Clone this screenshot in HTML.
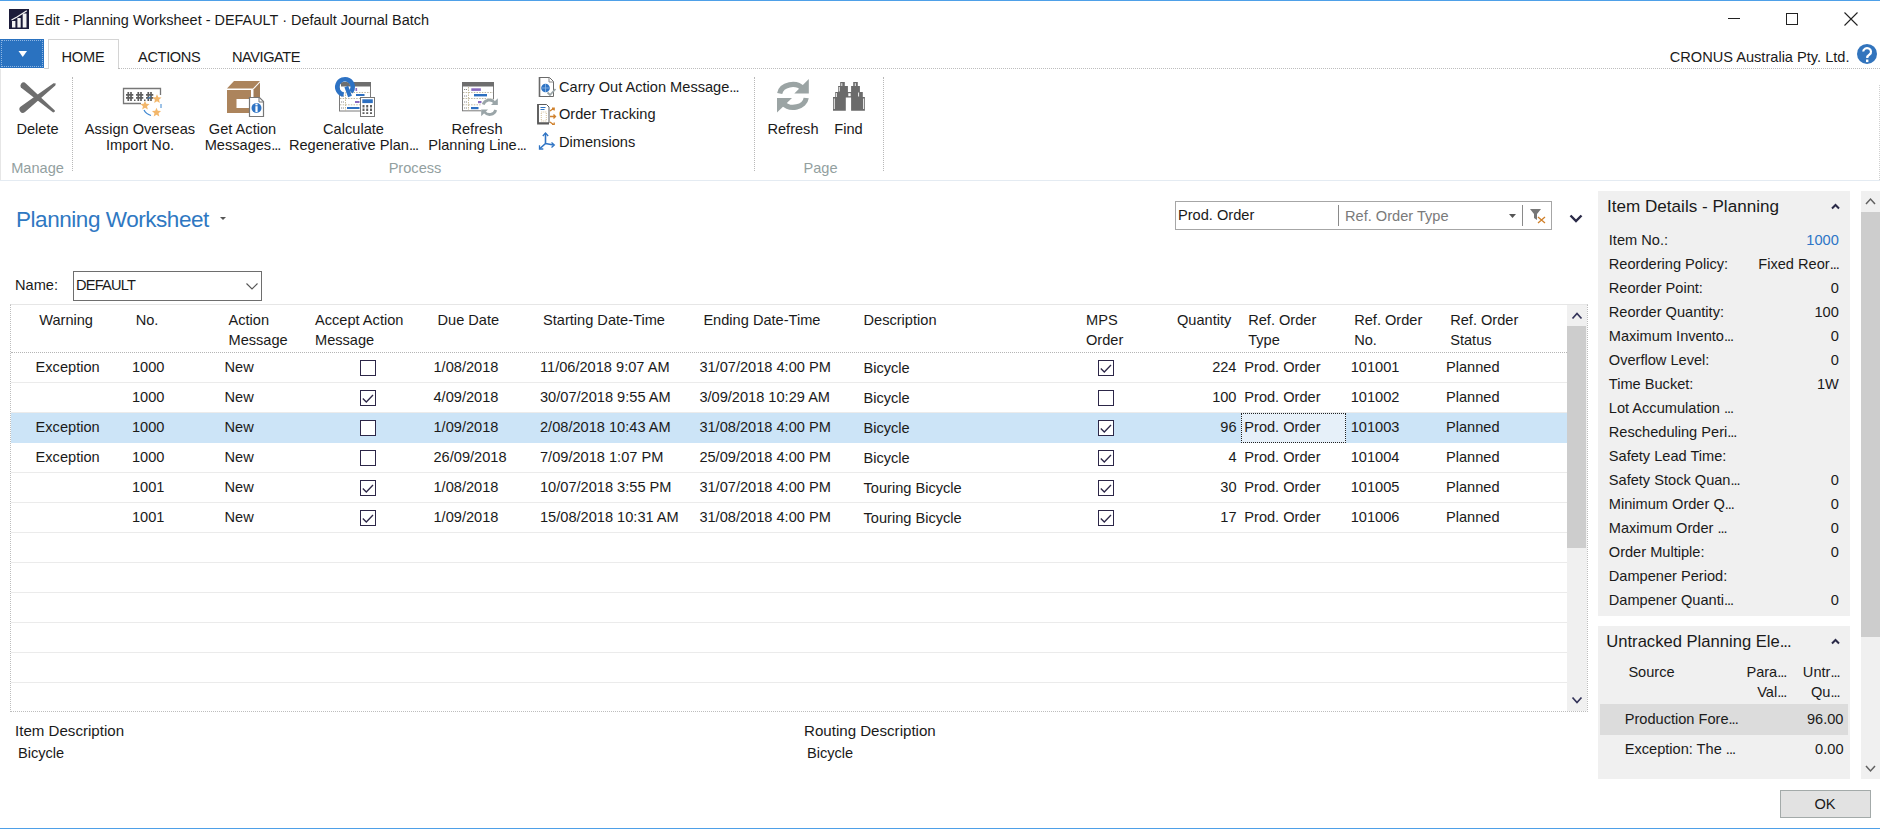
<!DOCTYPE html>
<html><head><meta charset="utf-8"><style>
html,body{margin:0;padding:0;background:#fff;width:1880px;height:829px;overflow:hidden;position:relative}
body{font-family:"Liberation Sans",sans-serif;color:#1a1a1a;font-size:14.6px}
.t{position:absolute;white-space:nowrap;font-size:14.6px;line-height:20px}
.c{text-align:center}
.el{letter-spacing:-1px}
svg{display:block}
</style></head><body>
<div style="position:absolute;left:0px;top:0px;width:1880px;height:1px;background:#4ea0e8"></div>
<div style="position:absolute;left:0px;top:828px;width:1880px;height:1px;background:#4ea0e8"></div>
<div class="t" style="top:9.6px;left:35.0px;font-size:14.45px;line-height:20px;">Edit - Planning Worksheet - DEFAULT · Default Journal Batch</div>
<div style="position:absolute;left:1728px;top:18px;width:12px;height:1px;background:#222"></div>
<div style="position:absolute;left:1786px;top:13px;width:12px;height:12px;border:1px solid #222;box-sizing:border-box"></div>
<svg style="position:absolute;left:1844px;top:12px" width="14" height="14" viewBox="0 0 14 14"><path d="M0.5 0.5L13.5 13.5M13.5 0.5L0.5 13.5" stroke="#222" stroke-width="1.1"/></svg>
<div style="position:absolute;left:0px;top:39px;width:44px;height:29px;background:#2a72c0"></div>
<div style="position:absolute;left:1px;top:40px;width:42px;height:27px;border:1px dotted #8fb6e2;box-sizing:border-box"></div>
<svg style="position:absolute;left:18px;top:51px" width="10" height="8" viewBox="0 0 10 8"><path d="M0.5 0H9L4.75 6z" fill="#fff"/></svg>
<div style="position:absolute;left:48px;top:39px;width:69px;height:29px;border:1px solid #d4d4d4;border-bottom:none;background:#fff"></div>
<div style="position:absolute;left:44px;top:68px;width:4px;height:1px;background:#d0d0d0"></div>
<div style="position:absolute;left:118px;top:68px;width:1762px;height:1px;border-top:1px dotted #bdbdbd;box-sizing:border-box"></div>
<div style="position:absolute;left:1879px;top:85px;width:1px;height:95px;border-left:1px dotted #d0d0d0;box-sizing:border-box"></div>
<div class="t" style="top:46.5px;left:61.5px;letter-spacing:-0.2px;">HOME</div>
<div class="t" style="top:46.5px;left:138.0px;letter-spacing:-0.35px;">ACTIONS</div>
<div class="t" style="top:46.5px;left:232.0px;letter-spacing:-0.45px;">NAVIGATE</div>
<div class="t" style="top:47.0px;right:30.5px;">CRONUS Australia Pty. Ltd.</div>
<div style="position:absolute;left:0px;top:69px;width:1px;height:111px;background:#e6e6e6"></div>
<div style="position:absolute;left:0px;top:180px;width:1880px;height:1px;background:#e4ebf2"></div>
<div style="position:absolute;left:72px;top:77px;width:1px;height:94px;border-left:1px dotted #b8b8b8;box-sizing:border-box"></div>
<div style="position:absolute;left:754px;top:77px;width:1px;height:94px;border-left:1px dotted #b8b8b8;box-sizing:border-box"></div>
<div style="position:absolute;left:883px;top:77px;width:1px;height:94px;border-left:1px dotted #b8b8b8;box-sizing:border-box"></div>
<div class="t c" style="left:-62.5px;top:118.69999999999999px;width:200px;">Delete</div>
<div class="t c" style="left:40px;top:118.69999999999999px;width:200px;">Assign Overseas</div>
<div class="t c" style="left:40px;top:134.7px;width:200px;">Import No.</div>
<div class="t c" style="left:142.5px;top:118.69999999999999px;width:200px;">Get Action</div>
<div class="t c" style="left:142.5px;top:134.7px;width:200px;">Messages<span class="el">...</span></div>
<div class="t c" style="left:253.5px;top:118.69999999999999px;width:200px;">Calculate</div>
<div class="t c" style="left:253.5px;top:134.7px;width:200px;">Regenerative Plan<span class="el">...</span></div>
<div class="t c" style="left:377px;top:118.69999999999999px;width:200px;">Refresh</div>
<div class="t c" style="left:377px;top:134.7px;width:200px;">Planning Line<span class="el">...</span></div>
<div class="t c" style="left:693px;top:119px;width:200px;">Refresh</div>
<div class="t c" style="left:748.5px;top:119px;width:200px;">Find</div>
<div class="t c" style="left:-62.5px;top:157.5px;width:200px;color:#939f9f;">Manage</div>
<div class="t c" style="left:315px;top:157.5px;width:200px;color:#939f9f;">Process</div>
<div class="t c" style="left:720.5px;top:157.5px;width:200px;color:#939f9f;">Page</div>
<div class="t" style="top:76.9px;left:559.0px;">Carry Out Action Message<span class="el">...</span></div>
<div class="t" style="top:104.2px;left:559.0px;">Order Tracking</div>
<div class="t" style="top:131.8px;left:559.0px;">Dimensions</div>
<svg style="position:absolute;left:9px;top:9px" width="20" height="20" viewBox="9 9 20 20"><rect x="9" y="9" width="20" height="20" fill="#1c1c3a"/><path d="M12 27.5V21h3.4v6.5zM17.4 27.5V18h3.3v9.5zM22.7 27.5V13.5h3.8v14z" fill="#f4f4f4"/><path d="M11.5 20L17 17L26.8 10.8" stroke="#f4f4f4" stroke-width="1.3" fill="none"/></svg>
<svg style="position:absolute;left:18px;top:80px" width="40" height="36" viewBox="18 80 40 36"><path d="M24.8 82.5L54.85 110.51Q55.5 112 53.15 112.49L20.9 87.5A3.4 3.4 0 0 1 24.8 82.5Z" fill="#6e6e6e"/><path d="M53.5 83.3L55.8 83.5L55.3 85.6L25 112A3.4 3.4 0 0 1 20.8 106.6Z" fill="#6e6e6e"/></svg>
<svg style="position:absolute;left:120px;top:85px" width="46" height="34" viewBox="120 85 46 34"><path d="M141 103.5H123.5V88.5H160.5V95" stroke="#777" stroke-width="1.3" fill="none"/><path d="M128.3 92V101M131 92V101M126 94.8H133.3M126 97.8H133.3M138.3 92V101M141 92V101M136 94.8H143.3M136 97.8H143.3M148.3 92V101M151 92V101M146 94.8H153.3M146 97.8H153.3" stroke="#5e5e5e" stroke-width="1.7" fill="none"/><rect x="134" y="99.5" width="1.5" height="1.5" fill="#5e5e5e"/><rect x="144" y="99.5" width="1.5" height="1.5" fill="#5e5e5e"/><path d="M157.00 94.20 L158.27 97.25 L161.57 97.52 L159.05 99.67 L159.82 102.88 L157.00 101.16 L154.18 102.88 L154.95 99.67 L152.43 97.52 L155.73 97.25Z" fill="#f3b76b"/><path d="M145.00 100.70 L146.27 103.75 L149.57 104.02 L147.05 106.17 L147.82 109.38 L145.00 107.66 L142.18 109.38 L142.95 106.17 L140.43 104.02 L143.73 103.75Z" fill="#f3b76b"/><path d="M156.50 107.70 L157.77 110.75 L161.07 111.02 L158.55 113.17 L159.32 116.38 L156.50 114.66 L153.68 116.38 L154.45 113.17 L151.93 111.02 L155.23 110.75Z" fill="#f3b76b"/><path d="M144 110Q146 114 151 115.5" stroke="#3d86d0" stroke-width="1.2" fill="none"/><path d="M161 104V108" stroke="#3d86d0" stroke-width="1"/><path d="M147.5 98.5L151 96.5" stroke="#3d86d0" stroke-width="1"/></svg>
<svg style="position:absolute;left:225px;top:79px" width="41" height="40" viewBox="225 79 41 40"><path d="M227 88.5L234 81H260L253 88.5Z" fill="#ac845c"/><path d="M253.5 89.5L260 82.5V104L253.5 110Z" fill="#a27d58"/><path d="M227 90H251V99H236.5V108H251V113H227Z" fill="#ac845c"/><path d="M249.5 97.5H259.5L263.5 101.5V116.5H249.5Z" fill="#fff" stroke="#777" stroke-width="1.2"/><path d="M259 97.5V102H263.5" stroke="#777" stroke-width="1" fill="none"/><circle cx="256.5" cy="108" r="5" fill="#2f74c4"/><rect x="255.4" y="106.2" width="2.2" height="6" fill="#fff"/><rect x="255.4" y="103.6" width="2.2" height="1.8" fill="#fff"/></svg>
<svg style="position:absolute;left:333px;top:75px" width="44" height="44" viewBox="333 75 44 44"><rect x="339.5" y="82.5" width="31" height="28.5" fill="#fff" stroke="#7a7a7a"/><rect x="339" y="82" width="32" height="4.5" fill="#6e6e6e"/><path d="M340 92.5H370M340 98.5H370M340 104.8H370" stroke="#b8b09a" stroke-width="0.9" stroke-dasharray="1.5 1.2"/><path d="M345.5 87V110.5" stroke="#c0b490" stroke-width="0.9" stroke-dasharray="1.5 1"/><path d="M341 89.5h3M341 96h3M341 102h3M341 108h3" stroke="#8a8a8a" stroke-dasharray="1.2 0.8"/><rect x="355" y="101" width="4.5" height="2" fill="#8a6ac0"/><rect x="347" y="107" width="12.5" height="2" fill="#2d6fc0"/><rect x="356" y="94" width="8.5" height="2" fill="#2d6fc0"/><rect x="355.5" y="88" width="1.6" height="3" fill="#8a6ac0"/><circle cx="345" cy="87" r="5.5" fill="#fff"/><rect x="341" y="82" width="14" height="4.5" fill="#6e6e6e" clip-path="circle(5.5px at 4px 5px)"/><path d="M343.65 94.63A7.75 7.75 0 1 1 350.94 91.98" stroke="#2d72c4" stroke-width="4.5" fill="none"/><path d="M346.3 86.5L350 96.5" stroke="#2d72c4" stroke-width="4"/><rect x="360.5" y="97.5" width="14" height="19" fill="#fff" stroke="#777"/><rect x="362.3" y="99.3" width="10.5" height="3.8" fill="#2d6fc0"/><path d="M362.5 105h2v2.4h-2zM366.2 105h2v2.4h-2zM370 105h2v2.4h-2zM362.5 108.6h2v2.4h-2zM366.2 108.6h2v2.4h-2zM370 108.6h2v2.4h-2zM362.5 112.3h2v1.8h-2zM366.2 112.3h2v1.8h-2zM370 112.3h2v1.8h-2z" fill="#5e5e5e"/></svg>
<svg style="position:absolute;left:460px;top:80px" width="40" height="38" viewBox="460 80 40 38"><rect x="462.5" y="82.5" width="31" height="28.299999999999997" fill="#fff" stroke="#7a7a7a"/><rect x="462" y="82" width="32" height="4.5" fill="#6e6e6e"/><path d="M463 92.5H493M463 98.5H493M463 104.8H493" stroke="#b8b09a" stroke-width="0.9" stroke-dasharray="1.5 1.2"/><path d="M468.5 87V110.3" stroke="#c0b490" stroke-width="0.9" stroke-dasharray="1.5 1"/><path d="M464 89.5h3M464 96h3M464 102h3M464 108h3" stroke="#8a8a8a" stroke-dasharray="1.2 0.8"/><rect x="471.3" y="88.3" width="9.6" height="2.6" fill="#8a6ac0"/><rect x="474" y="94" width="13" height="2.4" fill="#2d6fc0"/><rect x="478" y="101" width="3.5" height="2.2" fill="#8a6ac0"/><rect x="471" y="107" width="7.5" height="2.2" fill="#2d6fc0"/><circle cx="489.5" cy="107.2" r="9" fill="#fff"/><path d="M483.2 104.5A6.5 6.5 0 0 1 494.5 102.5" stroke="#9aa5a8" stroke-width="2.8" fill="none"/><path d="M497.8 98.2V105H491z" fill="#9aa5a8"/><path d="M495.8 110A6.5 6.5 0 0 1 484.5 112" stroke="#9aa5a8" stroke-width="2.8" fill="none"/><path d="M481.2 116.3V109.5H488z" fill="#9aa5a8"/></svg>
<svg style="position:absolute;left:537px;top:76px" width="20" height="22" viewBox="537 76 20 22"><path d="M539.5 77.5H549.5L553.5 81.5V96.5H539.5Z" fill="#fff" stroke="#6a6a6a" stroke-width="1"/><path d="M539.5 77V97" stroke="#6a6a6a" stroke-width="1.6"/><path d="M549 77.5V82H553.5" stroke="#888" fill="none"/><circle cx="545.5" cy="88" r="4.3" fill="#2f74c4"/><path d="M545.5 84V92M542 88H549" stroke="#8fb8e6" stroke-width="0.8"/><path d="M547.5 92.5L550 95L555.5 89" stroke="#9aa5a8" stroke-width="1.8" fill="none"/></svg>
<svg style="position:absolute;left:536px;top:103px" width="22" height="22" viewBox="536 103 22 22"><path d="M538 104.5H546.5L549 107V123H538Z" fill="#fff" stroke="#5a5a5a" stroke-width="1"/><path d="M538 104V123.5H549" stroke="#5a5a5a" stroke-width="1.8" fill="none"/><path d="M540.5 107.5h5M540.5 109.5h4" stroke="#2f74c4" stroke-width="1.2"/><rect x="541.3" y="112" width="5" height="9" fill="none" stroke="#c8b080" stroke-width="0.8" stroke-dasharray="1 1"/><path d="M550 111L554 108M552 108.2H554.2V110.5M550 116.5H555.5M553.5 114.5L555.5 116.5L553.5 118.5M550 122L554 125M552 124.8H554.2V122.5" stroke="#d0822e" stroke-width="1.3" fill="none"/></svg>
<svg style="position:absolute;left:537px;top:131px" width="19" height="20" viewBox="537 131 19 20"><path d="M545.5 133.5V143.5L540 148.5M545.5 143.5L553.5 145" stroke="#2f74c4" stroke-width="1.6" fill="none"/><path d="M542.8 136L545.5 133L548.2 136M539.5 145.2V149H543.3M551.5 142.5L554.3 145.1L551.5 147.5" stroke="#2f74c4" stroke-width="1.3" fill="none"/></svg>
<svg style="position:absolute;left:775px;top:77px" width="36" height="38" viewBox="775 77 36 38"><path d="M779.7 93.5A13 10.5 0 0 1 803 88.8" stroke="#9ba4a4" stroke-width="5.2" fill="none"/><path d="M808.8 79V93.5H794.3Z" fill="#9ba4a4"/><path d="M806.2 98A13 10.5 0 0 1 783 103.2" stroke="#9ba4a4" stroke-width="5.2" fill="none"/><path d="M777 112.6V98H792Z" fill="#9ba4a4"/></svg>
<svg style="position:absolute;left:831px;top:80px" width="36" height="33" viewBox="831 80 36 33"><path d="M840.2 82H844.8V86H847.9V92H851.1V86H853.2V82H857.8V86H859.9V92H862.8V97H864.9V110.7H851.1V97.5H845.8V110.7H833V97H835.2V92H838.1V86H840.2Z" fill="#6b6b6b"/><rect x="848.3" y="93.2" width="2.4" height="3" fill="#fff"/><path d="M834.3 98.5V109M836.4 93V97M839.3 87V91.5M841.8 83.2V86M855.3 83.2V86M861.3 87V91.5M863.6 98.5V109M858.6 92.5V96.5" stroke="#fff" stroke-width="0.9"/></svg>
<svg style="position:absolute;left:1856px;top:43px" width="22" height="22" viewBox="1856 43 22 22"><circle cx="1867" cy="53.9" r="10" fill="#3274bd"/><path d="M1863.2 51.6A3.9 3.6 0 1 1 1869.5 54.5C1867.8 55.6 1867.2 56.2 1867.2 58" stroke="#fff" stroke-width="2.2" fill="none"/><rect x="1866" y="59.5" width="2.4" height="2.6" fill="#fff"/></svg>
<div class="t" style="top:204.8px;left:16.0px;font-size:22.5px;line-height:29px;color:#2f78c2;letter-spacing:-0.45px;">Planning Worksheet</div>
<svg style="position:absolute;left:220px;top:217px" width="7" height="5" viewBox="0 0 7 5"><path d="M0 0H6L3 3z" fill="#555"/></svg>
<div class="t" style="top:274.8px;left:15.0px;">Name:</div>
<div style="position:absolute;left:73px;top:271px;width:189px;height:30px;border:1px solid #6e6e6e;box-sizing:border-box;background:#fff"></div>
<div class="t" style="top:274.8px;left:76.0px;letter-spacing:-0.8px;">DEFAULT</div>
<svg style="position:absolute;left:246px;top:283px" width="12" height="7" viewBox="0 0 12 7"><path d="M0.5 0.5L6 6L11.5 0.5" stroke="#555" stroke-width="1.1" fill="none"/></svg>
<div style="position:absolute;left:1175px;top:201px;width:377px;height:29px;border:1px solid #a6a6a6;box-sizing:border-box;background:#fff"></div>
<div class="t" style="top:205.4px;left:1178.0px;">Prod. Order</div>
<div style="position:absolute;left:1338px;top:205px;width:1px;height:21px;background:#8a8a8a"></div>
<div class="t" style="top:206.2px;left:1345.0px;color:#7a7a7a;">Ref. Order Type</div>
<svg style="position:absolute;left:1509px;top:214px" width="8" height="5" viewBox="0 0 8 5"><path d="M0 0H7L3.5 4z" fill="#555"/></svg>
<div style="position:absolute;left:1522px;top:205px;width:1px;height:21px;background:#8a8a8a"></div>
<svg style="position:absolute;left:1529px;top:208px" width="18" height="16" viewBox="0 0 18 16"><path d="M1 1H12L8 6V12L5 10V6z" fill="#777"/><path d="M9 9L16 15M16 9L9 15" stroke="#d0802a" stroke-width="1.3"/></svg>
<svg style="position:absolute;left:1569px;top:214px" width="14" height="9" viewBox="0 0 14 9"><path d="M1.5 1.5L7 7L12.5 1.5" stroke="#2a2a48" stroke-width="2.4" fill="none"/></svg>
<div style="position:absolute;left:10px;top:304px;width:1578px;height:408px;border:1px dotted #bdbdbd;border-top:1px solid #e6e6e6;box-sizing:border-box;background:#fff"></div>
<div style="position:absolute;left:11px;top:352px;width:1556px;height:1px;border-top:1px dotted #b5b5b5;box-sizing:border-box"></div>
<div style="position:absolute;left:11px;top:382px;width:1556px;height:1px;background:#ebebeb"></div>
<div style="position:absolute;left:11px;top:412px;width:1556px;height:1px;background:#ebebeb"></div>
<div style="position:absolute;left:11px;top:442px;width:1556px;height:1px;background:#ebebeb"></div>
<div style="position:absolute;left:11px;top:472px;width:1556px;height:1px;background:#ebebeb"></div>
<div style="position:absolute;left:11px;top:502px;width:1556px;height:1px;background:#ebebeb"></div>
<div style="position:absolute;left:11px;top:532px;width:1556px;height:1px;background:#ebebeb"></div>
<div style="position:absolute;left:11px;top:562px;width:1556px;height:1px;background:#ebebeb"></div>
<div style="position:absolute;left:11px;top:592px;width:1556px;height:1px;background:#ebebeb"></div>
<div style="position:absolute;left:11px;top:622px;width:1556px;height:1px;background:#ebebeb"></div>
<div style="position:absolute;left:11px;top:652px;width:1556px;height:1px;background:#ebebeb"></div>
<div style="position:absolute;left:11px;top:682px;width:1556px;height:1px;background:#ebebeb"></div>
<div style="position:absolute;left:11px;top:413px;width:1556px;height:30px;background:#cce4f7"></div>
<div style="position:absolute;left:1241px;top:413px;width:105px;height:30px;border:1px dotted #222;box-sizing:border-box;background:#e6f0f9"></div>
<div style="position:absolute;left:1567px;top:305px;width:20px;height:406px;background:#f0f0f0"></div>
<div style="position:absolute;left:1567px;top:326px;width:19px;height:222px;background:#cdcdcd"></div>
<svg style="position:absolute;left:1571px;top:310px" width="12" height="10" viewBox="0 0 12 10"><path d="M1.5 8.5L6 3.5L10.5 8.5" stroke="#34345a" stroke-width="1.7" fill="none"/></svg>
<svg style="position:absolute;left:1571px;top:695px" width="12" height="10" viewBox="0 0 12 10"><path d="M1.5 2.5L6 7.5L10.5 2.5" stroke="#34345a" stroke-width="1.7" fill="none"/></svg>
<div class="t" style="top:310.0px;left:39.2px;">Warning</div>
<div class="t" style="top:310.0px;left:135.7px;">No.</div>
<div class="t" style="top:310.0px;left:228.5px;">Action</div>
<div class="t" style="top:330.0px;left:228.5px;">Message</div>
<div class="t" style="top:310.0px;left:315.0px;">Accept Action</div>
<div class="t" style="top:330.0px;left:315.0px;">Message</div>
<div class="t" style="top:310.0px;left:437.5px;">Due Date</div>
<div class="t" style="top:310.0px;left:543.0px;">Starting Date-Time</div>
<div class="t" style="top:310.0px;left:703.4px;">Ending Date-Time</div>
<div class="t" style="top:310.0px;left:863.5px;">Description</div>
<div class="t" style="top:310.0px;left:1086.0px;">MPS</div>
<div class="t" style="top:330.0px;left:1086.0px;">Order</div>
<div class="t" style="top:310.0px;left:1177.0px;">Quantity</div>
<div class="t" style="top:310.0px;left:1248.2px;">Ref. Order</div>
<div class="t" style="top:330.0px;left:1248.2px;">Type</div>
<div class="t" style="top:310.0px;left:1354.2px;">Ref. Order</div>
<div class="t" style="top:330.0px;left:1354.2px;">No.</div>
<div class="t" style="top:310.0px;left:1450.2px;">Ref. Order</div>
<div class="t" style="top:330.0px;left:1450.2px;">Status</div>
<div class="t" style="top:357.0px;left:35.6px;">Exception</div>
<div class="t" style="top:357.0px;left:132.0px;">1000</div>
<div class="t" style="top:357.0px;left:224.5px;">New</div>
<svg style="position:absolute;left:360px;top:360px" width="16" height="16" viewBox="0 0 16 16"><rect x="0.5" y="0.5" width="15" height="15" fill="#fff" stroke="#2c2648"/></svg>
<div class="t" style="top:357.0px;left:433.5px;">1/08/2018</div>
<div class="t" style="top:357.0px;left:540.0px;">11/06/2018 9:07 AM</div>
<div class="t" style="top:357.0px;left:699.4px;">31/07/2018 4:00 PM</div>
<div class="t" style="top:357.5px;left:863.5px;">Bicycle</div>
<svg style="position:absolute;left:1098px;top:360px" width="16" height="16" viewBox="0 0 16 16"><rect x="0.5" y="0.5" width="15" height="15" fill="#fff" stroke="#2c2648"/><path d="M2.8 8.5L6.3 12L13 5" stroke="#2c2648" stroke-width="1.3" fill="none"/></svg>
<div class="t" style="top:357.0px;right:643.5px;">224</div>
<div class="t" style="top:357.0px;left:1244.3px;">Prod. Order</div>
<div class="t" style="top:357.0px;left:1350.7px;">101001</div>
<div class="t" style="top:357.0px;left:1446.0px;">Planned</div>
<div class="t" style="top:387.0px;left:132.0px;">1000</div>
<div class="t" style="top:387.0px;left:224.5px;">New</div>
<svg style="position:absolute;left:360px;top:390px" width="16" height="16" viewBox="0 0 16 16"><rect x="0.5" y="0.5" width="15" height="15" fill="#fff" stroke="#2c2648"/><path d="M2.8 8.5L6.3 12L13 5" stroke="#2c2648" stroke-width="1.3" fill="none"/></svg>
<div class="t" style="top:387.0px;left:433.5px;">4/09/2018</div>
<div class="t" style="top:387.0px;left:540.0px;">30/07/2018 9:55 AM</div>
<div class="t" style="top:387.0px;left:699.4px;">3/09/2018 10:29 AM</div>
<div class="t" style="top:387.5px;left:863.5px;">Bicycle</div>
<svg style="position:absolute;left:1098px;top:390px" width="16" height="16" viewBox="0 0 16 16"><rect x="0.5" y="0.5" width="15" height="15" fill="#fff" stroke="#2c2648"/></svg>
<div class="t" style="top:387.0px;right:643.5px;">100</div>
<div class="t" style="top:387.0px;left:1244.3px;">Prod. Order</div>
<div class="t" style="top:387.0px;left:1350.7px;">101002</div>
<div class="t" style="top:387.0px;left:1446.0px;">Planned</div>
<div class="t" style="top:417.0px;left:35.6px;">Exception</div>
<div class="t" style="top:417.0px;left:132.0px;">1000</div>
<div class="t" style="top:417.0px;left:224.5px;">New</div>
<svg style="position:absolute;left:360px;top:420px" width="16" height="16" viewBox="0 0 16 16"><rect x="0.5" y="0.5" width="15" height="15" fill="#fff" stroke="#2c2648"/></svg>
<div class="t" style="top:417.0px;left:433.5px;">1/09/2018</div>
<div class="t" style="top:417.0px;left:540.0px;">2/08/2018 10:43 AM</div>
<div class="t" style="top:417.0px;left:699.4px;">31/08/2018 4:00 PM</div>
<div class="t" style="top:417.5px;left:863.5px;">Bicycle</div>
<svg style="position:absolute;left:1098px;top:420px" width="16" height="16" viewBox="0 0 16 16"><rect x="0.5" y="0.5" width="15" height="15" fill="#fff" stroke="#2c2648"/><path d="M2.8 8.5L6.3 12L13 5" stroke="#2c2648" stroke-width="1.3" fill="none"/></svg>
<div class="t" style="top:417.0px;right:643.5px;">96</div>
<div class="t" style="top:417.0px;left:1244.3px;">Prod. Order</div>
<div class="t" style="top:417.0px;left:1350.7px;">101003</div>
<div class="t" style="top:417.0px;left:1446.0px;">Planned</div>
<div class="t" style="top:447.0px;left:35.6px;">Exception</div>
<div class="t" style="top:447.0px;left:132.0px;">1000</div>
<div class="t" style="top:447.0px;left:224.5px;">New</div>
<svg style="position:absolute;left:360px;top:450px" width="16" height="16" viewBox="0 0 16 16"><rect x="0.5" y="0.5" width="15" height="15" fill="#fff" stroke="#2c2648"/></svg>
<div class="t" style="top:447.0px;left:433.5px;">26/09/2018</div>
<div class="t" style="top:447.0px;left:540.0px;">7/09/2018 1:07 PM</div>
<div class="t" style="top:447.0px;left:699.4px;">25/09/2018 4:00 PM</div>
<div class="t" style="top:447.5px;left:863.5px;">Bicycle</div>
<svg style="position:absolute;left:1098px;top:450px" width="16" height="16" viewBox="0 0 16 16"><rect x="0.5" y="0.5" width="15" height="15" fill="#fff" stroke="#2c2648"/><path d="M2.8 8.5L6.3 12L13 5" stroke="#2c2648" stroke-width="1.3" fill="none"/></svg>
<div class="t" style="top:447.0px;right:643.5px;">4</div>
<div class="t" style="top:447.0px;left:1244.3px;">Prod. Order</div>
<div class="t" style="top:447.0px;left:1350.7px;">101004</div>
<div class="t" style="top:447.0px;left:1446.0px;">Planned</div>
<div class="t" style="top:477.0px;left:132.0px;">1001</div>
<div class="t" style="top:477.0px;left:224.5px;">New</div>
<svg style="position:absolute;left:360px;top:480px" width="16" height="16" viewBox="0 0 16 16"><rect x="0.5" y="0.5" width="15" height="15" fill="#fff" stroke="#2c2648"/><path d="M2.8 8.5L6.3 12L13 5" stroke="#2c2648" stroke-width="1.3" fill="none"/></svg>
<div class="t" style="top:477.0px;left:433.5px;">1/08/2018</div>
<div class="t" style="top:477.0px;left:540.0px;">10/07/2018 3:55 PM</div>
<div class="t" style="top:477.0px;left:699.4px;">31/07/2018 4:00 PM</div>
<div class="t" style="top:477.5px;left:863.5px;">Touring Bicycle</div>
<svg style="position:absolute;left:1098px;top:480px" width="16" height="16" viewBox="0 0 16 16"><rect x="0.5" y="0.5" width="15" height="15" fill="#fff" stroke="#2c2648"/><path d="M2.8 8.5L6.3 12L13 5" stroke="#2c2648" stroke-width="1.3" fill="none"/></svg>
<div class="t" style="top:477.0px;right:643.5px;">30</div>
<div class="t" style="top:477.0px;left:1244.3px;">Prod. Order</div>
<div class="t" style="top:477.0px;left:1350.7px;">101005</div>
<div class="t" style="top:477.0px;left:1446.0px;">Planned</div>
<div class="t" style="top:507.0px;left:132.0px;">1001</div>
<div class="t" style="top:507.0px;left:224.5px;">New</div>
<svg style="position:absolute;left:360px;top:510px" width="16" height="16" viewBox="0 0 16 16"><rect x="0.5" y="0.5" width="15" height="15" fill="#fff" stroke="#2c2648"/><path d="M2.8 8.5L6.3 12L13 5" stroke="#2c2648" stroke-width="1.3" fill="none"/></svg>
<div class="t" style="top:507.0px;left:433.5px;">1/09/2018</div>
<div class="t" style="top:507.0px;left:540.0px;">15/08/2018 10:31 AM</div>
<div class="t" style="top:507.0px;left:699.4px;">31/08/2018 4:00 PM</div>
<div class="t" style="top:507.5px;left:863.5px;">Touring Bicycle</div>
<svg style="position:absolute;left:1098px;top:510px" width="16" height="16" viewBox="0 0 16 16"><rect x="0.5" y="0.5" width="15" height="15" fill="#fff" stroke="#2c2648"/><path d="M2.8 8.5L6.3 12L13 5" stroke="#2c2648" stroke-width="1.3" fill="none"/></svg>
<div class="t" style="top:507.0px;right:643.5px;">17</div>
<div class="t" style="top:507.0px;left:1244.3px;">Prod. Order</div>
<div class="t" style="top:507.0px;left:1350.7px;">101006</div>
<div class="t" style="top:507.0px;left:1446.0px;">Planned</div>
<div class="t" style="top:721.0px;left:15.0px;font-size:15.1px;line-height:20px;">Item Description</div>
<div class="t" style="top:742.6px;left:18.0px;">Bicycle</div>
<div class="t" style="top:721.0px;left:804.0px;font-size:15.1px;line-height:20px;">Routing Description</div>
<div class="t" style="top:742.6px;left:807.0px;">Bicycle</div>
<div style="position:absolute;left:1598px;top:191px;width:252px;height:425px;background:#f0f0f0"></div>
<div class="t" style="top:197.0px;left:1607.0px;font-size:17.1px;line-height:20px;">Item Details - Planning</div>
<svg style="position:absolute;left:1831px;top:203px" width="9" height="7" viewBox="0 0 9 7"><path d="M1 5.5L4.5 2L8 5.5" stroke="#2a2a48" stroke-width="2" fill="none"/></svg>
<div class="t" style="top:229.6px;left:1608.8px;">Item No.:</div>
<div class="t" style="top:229.6px;right:41.2px;color:#2e75c6;">1000</div>
<div class="t" style="top:253.6px;left:1608.8px;">Reordering Policy:</div>
<div class="t" style="top:253.6px;right:41.2px;">Fixed Reor<span class="el">...</span></div>
<div class="t" style="top:277.6px;left:1608.8px;">Reorder Point:</div>
<div class="t" style="top:277.6px;right:41.2px;">0</div>
<div class="t" style="top:301.6px;left:1608.8px;">Reorder Quantity:</div>
<div class="t" style="top:301.6px;right:41.2px;">100</div>
<div class="t" style="top:325.6px;left:1608.8px;">Maximum Invento<span class="el">...</span></div>
<div class="t" style="top:325.6px;right:41.2px;">0</div>
<div class="t" style="top:349.6px;left:1608.8px;">Overflow Level:</div>
<div class="t" style="top:349.6px;right:41.2px;">0</div>
<div class="t" style="top:373.6px;left:1608.8px;">Time Bucket:</div>
<div class="t" style="top:373.6px;right:41.2px;">1W</div>
<div class="t" style="top:397.6px;left:1608.8px;">Lot Accumulation <span class="el">...</span></div>
<div class="t" style="top:421.6px;left:1608.8px;">Rescheduling Peri<span class="el">...</span></div>
<div class="t" style="top:445.6px;left:1608.8px;">Safety Lead Time:</div>
<div class="t" style="top:469.6px;left:1608.8px;">Safety Stock Quan<span class="el">...</span></div>
<div class="t" style="top:469.6px;right:41.2px;">0</div>
<div class="t" style="top:493.6px;left:1608.8px;">Minimum Order Q<span class="el">...</span></div>
<div class="t" style="top:493.6px;right:41.2px;">0</div>
<div class="t" style="top:517.6px;left:1608.8px;">Maximum Order <span class="el">...</span></div>
<div class="t" style="top:517.6px;right:41.2px;">0</div>
<div class="t" style="top:541.6px;left:1608.8px;">Order Multiple:</div>
<div class="t" style="top:541.6px;right:41.2px;">0</div>
<div class="t" style="top:565.6px;left:1608.8px;">Dampener Period:</div>
<div class="t" style="top:589.6px;left:1608.8px;">Dampener Quanti<span class="el">...</span></div>
<div class="t" style="top:589.6px;right:41.2px;">0</div>
<div style="position:absolute;left:1598px;top:626px;width:252px;height:153px;background:#f0f0f0"></div>
<div class="t" style="top:632.0px;left:1606.3px;font-size:16.6px;line-height:20px;">Untracked Planning Ele<span class="el">...</span></div>
<svg style="position:absolute;left:1831px;top:638px" width="9" height="7" viewBox="0 0 9 7"><path d="M1 5.5L4.5 2L8 5.5" stroke="#2a2a48" stroke-width="2" fill="none"/></svg>
<div class="t" style="top:662.0px;left:1628.4px;">Source</div>
<div class="t" style="top:662.0px;right:93.6px;">Para<span class="el">...</span></div>
<div class="t" style="top:681.6px;right:93.6px;">Val<span class="el">...</span></div>
<div class="t" style="top:662.0px;right:40.4px;">Untr<span class="el">...</span></div>
<div class="t" style="top:681.6px;right:40.4px;">Qu<span class="el">...</span></div>
<div style="position:absolute;left:1600px;top:704px;width:248px;height:31px;background:#dcdcdc"></div>
<div class="t" style="top:708.7px;left:1624.7px;">Production Fore<span class="el">...</span></div>
<div class="t" style="top:708.7px;right:36.5px;">96.00</div>
<div class="t" style="top:739.1px;left:1624.7px;">Exception: The <span class="el">...</span></div>
<div class="t" style="top:739.1px;right:36.5px;">0.00</div>
<div style="position:absolute;left:1861px;top:191px;width:19px;height:588px;background:#f0f0f0"></div>
<div style="position:absolute;left:1861px;top:212px;width:19px;height:425px;background:#cdcdcd"></div>
<svg style="position:absolute;left:1865px;top:197px" width="11" height="8" viewBox="0 0 11 8"><path d="M1 7L5.5 2L10 7" stroke="#606060" stroke-width="1.5" fill="none"/></svg>
<svg style="position:absolute;left:1865px;top:765px" width="11" height="8" viewBox="0 0 11 8"><path d="M1 1L5.5 6L10 1" stroke="#606060" stroke-width="1.5" fill="none"/></svg>
<div style="position:absolute;left:1780px;top:790px;width:91px;height:28px;border:1px solid #a3aaa9;box-sizing:border-box;background:#e2e2e2"></div>
<div class="t c" style="left:1725px;top:794px;width:200px;">OK</div>
</body></html>
